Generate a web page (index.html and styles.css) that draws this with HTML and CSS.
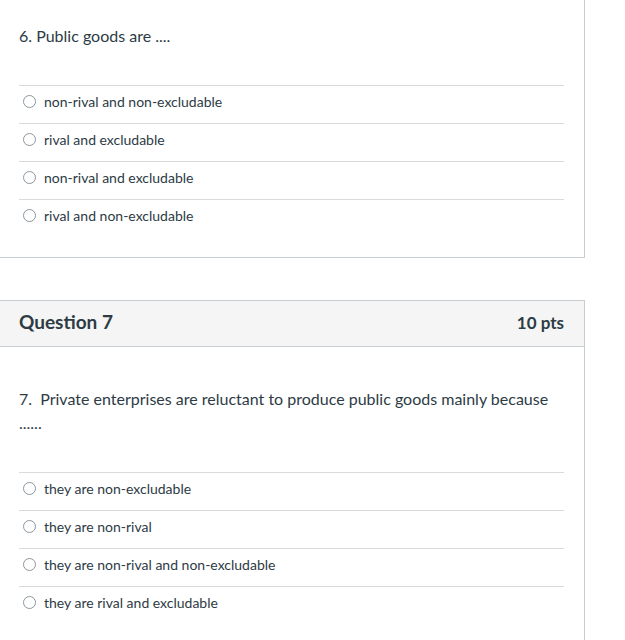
FILE: index.html
```html
<!DOCTYPE html>
<html>
<head>
<meta charset="utf-8">
<link rel="stylesheet" href="styles.css">
</head>
<body>
<div class="page">
  <div class="card card-first">
    <div class="body">
      <div class="qtext">6. Public goods are ....</div>
      <div class="answers">
        <div class="answer"><span class="radio"></span><span class="label">non-rival and non-excludable</span></div>
        <div class="answer"><span class="radio"></span><span class="label">rival and excludable</span></div>
        <div class="answer"><span class="radio"></span><span class="label">non-rival and excludable</span></div>
        <div class="answer"><span class="radio"></span><span class="label">rival and non-excludable</span></div>
      </div>
    </div>
  </div>
  <div class="card card-second">
    <div class="header">
      <span class="title">Question 7</span>
      <span class="pts">10 pts</span>
    </div>
    <div class="body">
      <div class="qtext">7.&nbsp; Private enterprises are reluctant to produce public goods mainly because ......</div>
      <div class="answers">
        <div class="answer"><span class="radio"></span><span class="label">they are non-excludable</span></div>
        <div class="answer"><span class="radio"></span><span class="label">they are non-rival</span></div>
        <div class="answer"><span class="radio"></span><span class="label">they are non-rival and non-excludable</span></div>
        <div class="answer"><span class="radio"></span><span class="label">they are rival and excludable</span></div>
      </div>
    </div>
  </div>
</div>
</body>
</html>
```
FILE: styles.css
```css
html, body {
  margin: 0;
  padding: 0;
  background: #ffffff;
}
body {
  font-family: Lato, "Liberation Sans", sans-serif;
  color: #2d3b45;
  overflow: hidden;
}
.page {
  width: 586px;
  margin-left: -1px;
}
.card {
  border: 1px solid #c7cdd1;
  background: #fff;
}
.card-first {
  border-top: none;
}
.card-second {
  margin-top: 42px;
  border-bottom: none;
  min-height: 400px;
}
.header {
  display: flex;
  align-items: center;
  justify-content: space-between;
  background: #f5f5f5;
  border-bottom: 1px solid #c7cdd1;
  height: 45px;
  padding: 0 20px 0 19px;
}
.title {
  font-size: 19px;
  font-weight: 700;
  line-height: 24px;
  padding-bottom: 3px;
}
.pts {
  font-size: 17px;
  font-weight: 700;
  line-height: 24px;
  padding-bottom: 2px;
}
.body {
  padding: 0 20px 20px 19px;
}
.card-first .body {
  padding-top: 24px;
}
.card-second .body {
  padding-top: 40px;
}
.qtext {
  font-size: 16px;
  line-height: 24px;
  padding-right: 8px;
}
.card-first .qtext {
  margin-bottom: 37px;
}
.card-second .qtext {
  margin-bottom: 37px;
}
.answer {
  display: flex;
  align-items: center;
  border-top: 1px solid #dadada;
  padding: 6px 0 12px 4px;
  line-height: 19px;
  font-size: 14px;
}
.radio {
  width: 11px;
  height: 11px;
  border: 1px solid #8b969e;
  border-radius: 50%;
  background: #fff;
  flex: none;
  margin-right: 8px;
}
```
